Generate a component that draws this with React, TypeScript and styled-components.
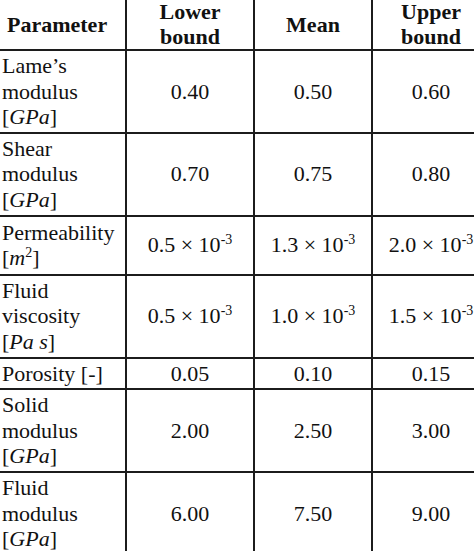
import React from 'react'
import styled, { createGlobalStyle } from 'styled-components'

const GlobalStyle = createGlobalStyle`
  html, body {
    margin: 0;
    padding: 0;
    background: #fff;
  }
  body {
    width: 474px;
    height: 551px;
    overflow: hidden;
    font-family: "Liberation Serif", "Times New Roman", serif;
    color: #111;
  }
`;

const Frame = styled.div`
  width: 474px;
  height: 551px;
  overflow: hidden;
`;

const Table = styled.table`
  border-collapse: collapse;
  table-layout: fixed;
  width: 490px;
  margin-top: -2px;
  font-size: 22px;
  line-height: 25.6px;
`;

const Col = styled.col<{ w: number }>`
  width: ${p => p.w}px;
`;

const HeadCell = styled.th<{ first?: boolean }>`
  font-weight: bold;
  text-align: ${p => (p.first ? 'left' : 'center')};
  vertical-align: middle;
  padding: 1px 0 0 ${p => (p.first ? '7px' : '0')};
  border-bottom: 2px solid #1c1c1c;
  border-right: 2px solid #1c1c1c;
  line-height: 25px;
`;

const NameCell = styled.td<{ $extra: number }>`
  text-align: left;
  vertical-align: middle;
  padding: ${p => 2 + p.$extra}px 0 ${p => 2 + p.$extra}px 2px;
  border-bottom: 2px solid #1c1c1c;
  border-right: 2px solid #1c1c1c;
`;

const ValueCell = styled.td<{ $extra: number }>`
  text-align: center;
  vertical-align: middle;
  padding: ${p => 2 + p.$extra}px 0;
  border-bottom: 2px solid #1c1c1c;
  border-right: 2px solid #1c1c1c;
  white-space: nowrap;
`;

const Unit = styled.i`
  font-style: italic;
`;

const Sup = styled.sup`
  font-size: 14px;
  line-height: 0;
  vertical-align: 8px;
`;

const Sci = ({ m }: { m: string }) => (
  <>
    {m} × 10<Sup>-3</Sup>
  </>
);

const rows: { name: React.ReactNode; values: React.ReactNode[]; extra?: number }[] = [
  {
    name: <>Lame’s<br />modulus<br />[<Unit>GPa</Unit>]</>,
    values: ['0.40', '0.50', '0.60'],
  },
  {
    name: <>Shear<br />modulus<br />[<Unit>GPa</Unit>]</>,
    values: ['0.70', '0.75', '0.80'],
  },
  {
    name: <>Permeability<br />[<Unit>m</Unit><Sup>2</Sup>]</>,
    values: [<Sci m="0.5" />, <Sci m="1.3" />, <Sci m="2.0" />],
    extra: 1,
  },
  {
    name: <>Fluid<br />viscosity<br />[<Unit>Pa s</Unit>]</>,
    values: [<Sci m="0.5" />, <Sci m="1.0" />, <Sci m="1.5" />],
  },
  {
    name: <>Porosity [-]</>,
    values: ['0.05', '0.10', '0.15'],
  },
  {
    name: <>Solid<br />modulus<br />[<Unit>GPa</Unit>]</>,
    values: ['2.00', '2.50', '3.00'],
  },
  {
    name: <>Fluid<br />modulus<br />[<Unit>GPa</Unit>]</>,
    values: ['6.00', '7.50', '9.00'],
  },
];

export default function App() {
  return (
    <Frame>
      <GlobalStyle />
      <Table>
        <colgroup>
          <Col w={126} />
          <Col w={128} />
          <Col w={118} />
          <Col w={118} />
        </colgroup>
        <thead>
          <tr>
            <HeadCell first>Parameter</HeadCell>
            <HeadCell>Lower<br />bound</HeadCell>
            <HeadCell>Mean</HeadCell>
            <HeadCell>Upper<br />bound</HeadCell>
          </tr>
        </thead>
        <tbody>
          {rows.map((row, i) => (
            <tr key={i}>
              <NameCell $extra={row.extra ?? 0}>{row.name}</NameCell>
              {row.values.map((v, j) => (
                <ValueCell key={j} $extra={row.extra ?? 0}>{v}</ValueCell>
              ))}
            </tr>
          ))}
        </tbody>
      </Table>
    </Frame>
  );
}
